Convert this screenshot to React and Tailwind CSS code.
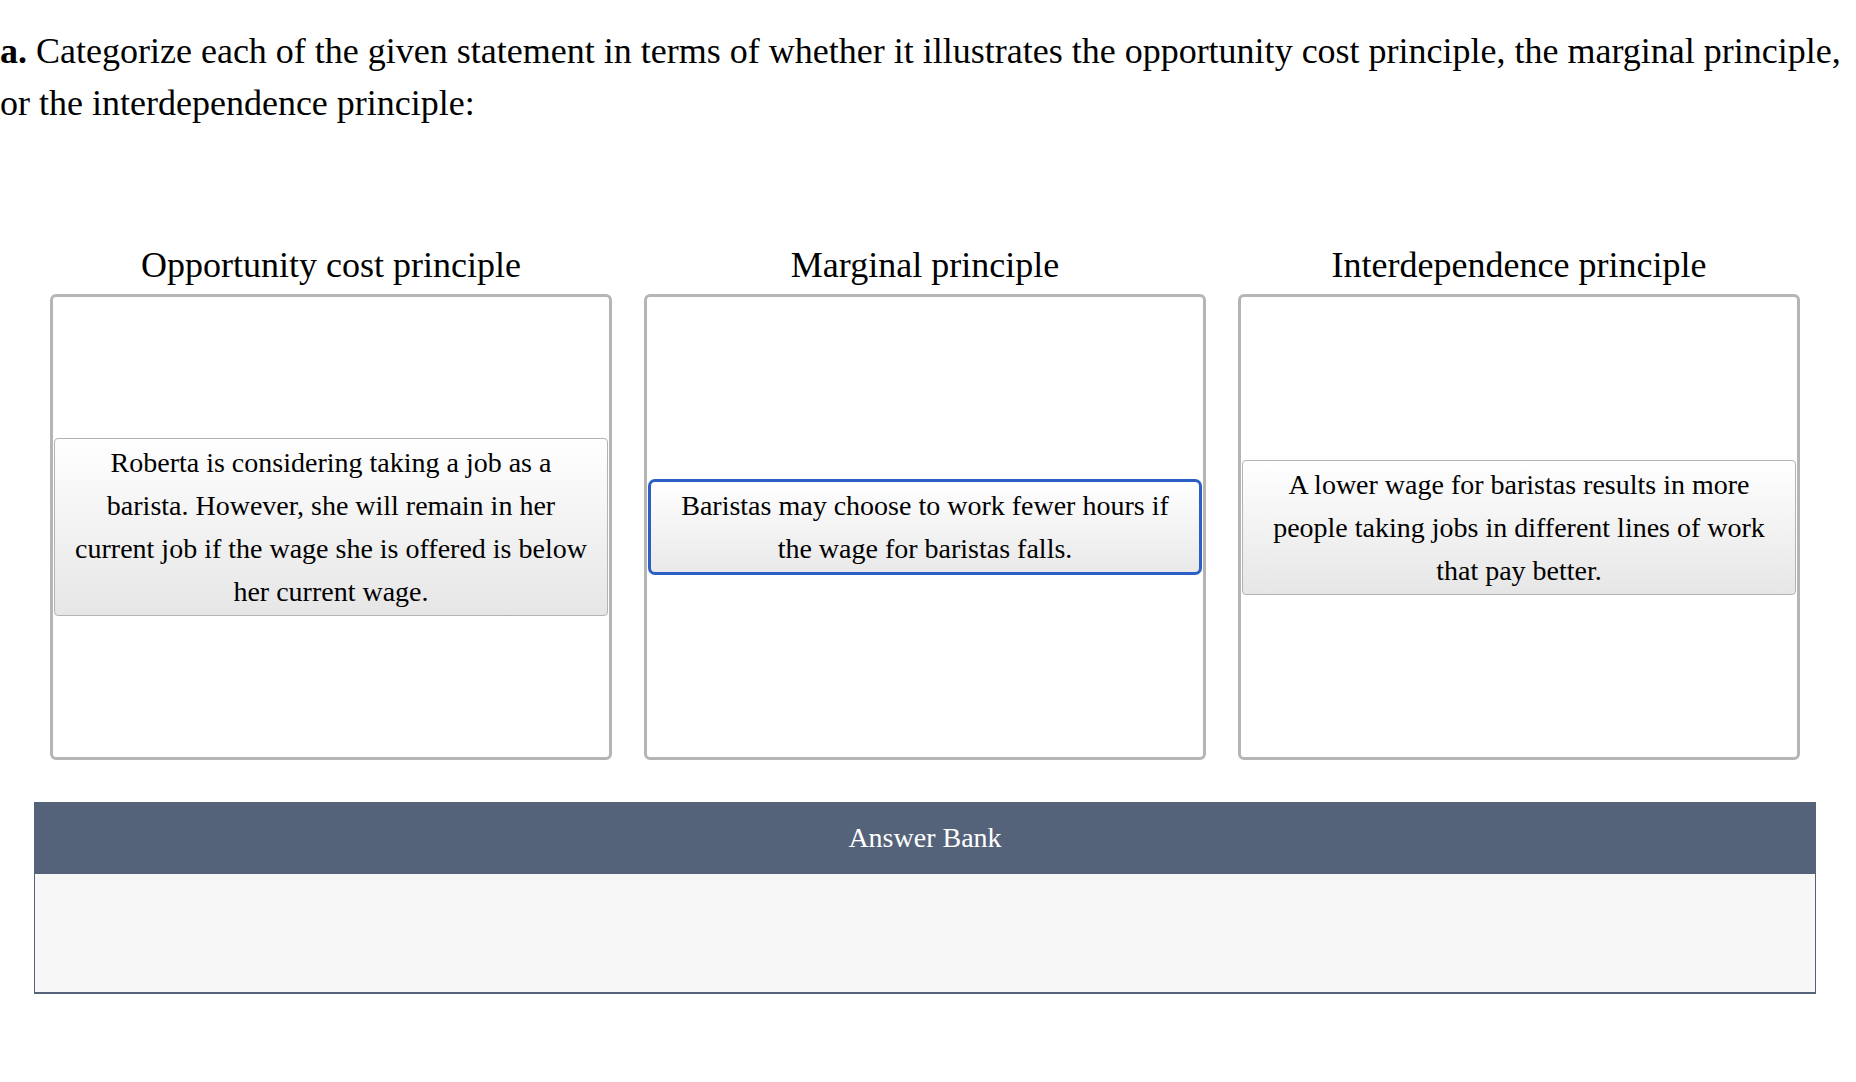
import React from "react";

const columns = [
  {
    title: "Opportunity cost principle",
    card: "Roberta is considering taking a job as a barista. However, she will remain in her current job if the wage she is offered is below her current wage.",
    active: false
  },
  {
    title: "Marginal principle",
    card: "Baristas may choose to work fewer hours if the wage for baristas falls.",
    active: true
  },
  {
    title: "Interdependence principle",
    card: "A lower wage for baristas results in more people taking jobs in different lines of work that pay better.",
    active: false
  }
];

function Card({ text, active }) {
  return (
    <div
      className={
        active
          ? "w-full rounded-[7px] border-[3px] border-[#2b5fc4] bg-gradient-to-b from-white to-[#e9e9e9] px-4 py-[2px] text-center text-[28px] leading-[43px] text-black"
          : "w-full rounded-[4px] border border-[#b3b3b3] bg-gradient-to-b from-white to-[#e6e6e6] px-4 py-[2px] text-center text-[28px] leading-[43px] text-black"
      }
    >
      {text}
    </div>
  );
}

export default function App() {
  return (
    <div className="min-h-screen bg-white text-black font-['Liberation_Serif','Times_New_Roman',serif]">
      <p className="pt-[25px] text-[36px] leading-[52px]">
        <b>a.</b> Categorize each of the given statement in terms of whether it illustrates the opportunity cost principle, the marginal principle, or the interdependence principle:
      </p>

      <div className="ml-[34px] w-[1782px] mt-[115px]">
        <div className="grid grid-cols-3">
          {columns.map((col) => (
            <div key={col.title} className="flex flex-col items-center px-[16px]">
              <h2 className="text-[36px] leading-[43px] font-normal">{col.title}</h2>
              <div className="mt-[7px] flex h-[466px] w-[562px] items-center rounded-[6px] border-[3px] border-[#b5b5b5] bg-white px-[1px]">
                <Card text={col.card} active={col.active} />
              </div>
            </div>
          ))}
        </div>

        <div className="mt-[42px] border border-b-2 border-[#55637a] bg-[#f7f7f7]">
          <div className="flex h-[71px] items-center justify-center bg-[#55637a] pb-[2px] text-[28px] text-white">
            Answer Bank
          </div>
          <div className="h-[118px]"></div>
        </div>
      </div>
    </div>
  );
}
